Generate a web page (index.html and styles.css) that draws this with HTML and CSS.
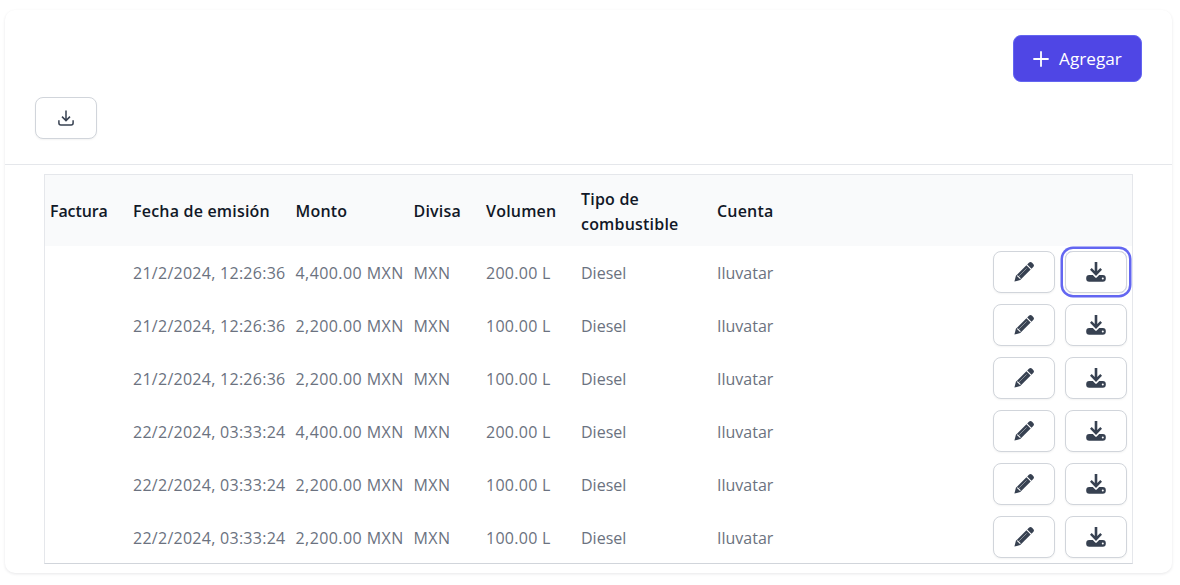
FILE: index.html
```html
<!DOCTYPE html>
<html lang="es">
<head>
<meta charset="utf-8">
<title>Facturas</title>
<link rel="stylesheet" href="styles.css">
</head>
<body>
<svg class="defs" width="0" height="0" aria-hidden="true">
  <symbol id="pen" viewBox="0 0 20 20"><path d="M14.9.8a2.3 2.3 0 0 1 3.2 0l1.1 1.1a2.3 2.3 0 0 1 0 3.2l-1.7 1.7-4.3-4.3zM12.4 3.3l4.3 4.3L6.2 18.1.4 19.6l1.5-5.8z" fill="currentColor"/><path d="M3.3 13.6l3.1 3.1" stroke="#fff" stroke-width="1.1"/><path d="M12.6 6.4l-7.4 7.4" stroke="#fff" stroke-width=".7" opacity=".6"/></symbol>
  <symbol id="dl" viewBox="0 0 20 20"><path d="M8.7 0h2.6v8.9l3-3 1.7 1.8-6 6.2-6-6.2 1.7-1.8 3 3z" fill="currentColor"/><path fill-rule="evenodd" d="M3.2 13h3.6l2.2 2.2a1.4 1.4 0 0 0 2 0L13.2 13h3.6a3 3 0 0 1 3 3v.8a3 3 0 0 1-3 3H3.2a3 3 0 0 1-3-3V16a3 3 0 0 1 3-3zm13.6 2.6a1 1 0 1 0 0 2 1 1 0 0 0 0-2z" fill="currentColor"/></symbol>
</svg>
<main class="card">
  <header class="toolbar">
    <div class="toolbar-top">
      <button class="btn-primary" type="button">
        <svg class="plus" viewBox="0 0 16 16"><path d="M8 1v14M1 8h14" stroke="currentColor" stroke-width="1.8" stroke-linecap="round"/></svg>
        Agregar
      </button>
    </div>
    <button class="btn-icon export" type="button" aria-label="Descargar">
      <svg class="tray" viewBox="0 0 16 16" fill="none" stroke="currentColor" stroke-width="1.5"><path d="M8 .6v9.8M4 6.6l4 4 4-4M.9 10.2v2.8a2 2 0 0 0 2 2h10.2a2 2 0 0 0 2-2v-2.8"/></svg>
    </button>
  </header>
  <section class="table-wrap">
    <table>
      <colgroup>
        <col class="c1"><col class="c2"><col class="c3"><col class="c4"><col class="c5"><col class="c6"><col class="c7"><col>
      </colgroup>
      <thead>
        <tr><th class="first">Factura</th><th>Fecha de emisión</th><th>Monto</th><th>Divisa</th><th>Volumen</th><th>Tipo de combustible</th><th>Cuenta</th><th></th></tr>
      </thead>
      <tbody>
        <tr><td></td><td class="date">21/2/2024, 12:26:36</td><td class="amount">4,400.00 MXN</td><td class="amount">MXN</td><td class="date">200.00 L</td><td>Diesel</td><td>Iluvatar</td>
          <td class="actions"><button class="btn-icon" type="button" aria-label="Editar"><svg class="ico"><use href="#pen"/></svg></button><span class="focus"><button class="btn-icon" type="button" aria-label="Descargar"><svg class="ico"><use href="#dl"/></svg></button></span></td></tr>
        <tr><td></td><td class="date">21/2/2024, 12:26:36</td><td class="amount">2,200.00 MXN</td><td class="amount">MXN</td><td class="date">100.00 L</td><td>Diesel</td><td>Iluvatar</td>
          <td class="actions"><button class="btn-icon" type="button" aria-label="Editar"><svg class="ico"><use href="#pen"/></svg></button><button class="btn-icon" type="button" aria-label="Descargar"><svg class="ico"><use href="#dl"/></svg></button></td></tr>
        <tr><td></td><td class="date">21/2/2024, 12:26:36</td><td class="amount">2,200.00 MXN</td><td class="amount">MXN</td><td class="date">100.00 L</td><td>Diesel</td><td>Iluvatar</td>
          <td class="actions"><button class="btn-icon" type="button" aria-label="Editar"><svg class="ico"><use href="#pen"/></svg></button><button class="btn-icon" type="button" aria-label="Descargar"><svg class="ico"><use href="#dl"/></svg></button></td></tr>
        <tr><td></td><td class="date">22/2/2024, 03:33:24</td><td class="amount">4,400.00 MXN</td><td class="amount">MXN</td><td class="date">200.00 L</td><td>Diesel</td><td>Iluvatar</td>
          <td class="actions"><button class="btn-icon" type="button" aria-label="Editar"><svg class="ico"><use href="#pen"/></svg></button><button class="btn-icon" type="button" aria-label="Descargar"><svg class="ico"><use href="#dl"/></svg></button></td></tr>
        <tr><td></td><td class="date">22/2/2024, 03:33:24</td><td class="amount">2,200.00 MXN</td><td class="amount">MXN</td><td class="date">100.00 L</td><td>Diesel</td><td>Iluvatar</td>
          <td class="actions"><button class="btn-icon" type="button" aria-label="Editar"><svg class="ico"><use href="#pen"/></svg></button><button class="btn-icon" type="button" aria-label="Descargar"><svg class="ico"><use href="#dl"/></svg></button></td></tr>
        <tr><td></td><td class="date">22/2/2024, 03:33:24</td><td class="amount">2,200.00 MXN</td><td class="amount">MXN</td><td class="date">100.00 L</td><td>Diesel</td><td>Iluvatar</td>
          <td class="actions"><button class="btn-icon" type="button" aria-label="Editar"><svg class="ico"><use href="#pen"/></svg></button><button class="btn-icon" type="button" aria-label="Descargar"><svg class="ico"><use href="#dl"/></svg></button></td></tr>
      </tbody>
    </table>
  </section>
</main>
</body>
</html>
```
FILE: styles.css
```css
* { box-sizing: border-box; }
html, body { height: 100%; }
body {
  margin: 0;
  padding: 10px 8px 12px 5px;
  background: #fff;
  font-family: "Open Sans", "Noto Sans", sans-serif;
  font-size: 16px;
  color: #111827;
}
.defs { position: absolute; }
.card {
  height: 563px;
  border-radius: 10px;
  background: #fff;
  box-shadow: 0 1px 3px rgba(17, 24, 39, .1);
  padding-top: 1px;
}
.toolbar {
  height: 154px;
  padding: 24px 30px 0;
  border-bottom: 1px solid #e5e7eb;
}
.toolbar-top { display: flex; justify-content: flex-end; margin-bottom: 15px; }
.btn-primary {
  display: flex;
  align-items: center;
  justify-content: center;
  gap: 10px;
  width: 129px;
  height: 47px;
  border: 1px solid #6366f1;
  border-radius: 8px;
  background: #4f46e5;
  color: #fff;
  font: inherit;
  font-size: 17.2px;
}
.plus { width: 16px; height: 16px; }
.btn-icon {
  display: inline-flex;
  align-items: center;
  justify-content: center;
  width: 62px;
  height: 42px;
  padding: 0;
  border: 1px solid #d1d5db;
  border-radius: 8px;
  background: #fff;
  color: #374151;
  box-shadow: 0 1px 2px rgba(0, 0, 0, .05);
}
.tray { width: 16px; height: 16px; }
.ico { width: 20px; height: 20px; }
.table-wrap {
  margin: 9px 39px 0;
  border: 1px solid #e5e7eb;
  border-bottom-color: #d1d5db;
  height: 390px;
  overflow: hidden;
}
table { width: 100%; border-collapse: collapse; table-layout: fixed; }
.c1 { width: 82px; }
.c2 { width: 162.5px; }
.c3 { width: 118px; }
.c4 { width: 72.5px; }
.c5 { width: 95px; }
.c6 { width: 136px; }
.c7 { width: 100px; }
th {
  height: 71px;
  padding: 2px 6px 0;
  background: #f9fafb;
  text-align: left;
  font-weight: 600;
  line-height: 25px;
  letter-spacing: .2px;
  color: #111827;
}
th.first { padding-left: 5px; letter-spacing: -.1px; }
td {
  height: 53px;
  padding: 0 6px;
  color: #6b7280;
  white-space: nowrap;
}
.date { letter-spacing: .27px; }
.amount { letter-spacing: .42px; }
.actions { text-align: right; font-size: 0; padding: 0 5px 2px 0; }
.actions .btn-icon, .actions .focus { vertical-align: middle; }
.actions > .btn-icon + .btn-icon, .actions > .focus { margin-left: 10px; }
.focus {
  display: inline-block;
  height: 42px;
  border-radius: 8px;
  box-shadow: 0 0 0 2px #fff, 0 0 0 4.5px #6366f1;
}
```
